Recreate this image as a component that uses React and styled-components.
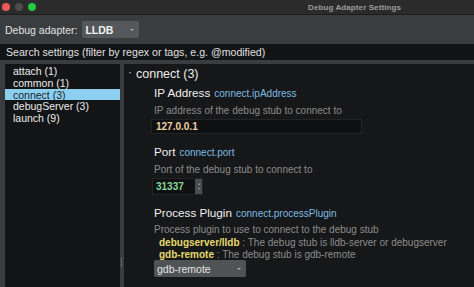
import styled, { createGlobalStyle } from "styled-components";

const GlobalStyle = createGlobalStyle`
  html, body {
    margin: 0;
    padding: 0;
    background: #3a3d3f;
    font-family: "Liberation Sans", Arial, sans-serif;
    overflow: hidden;
  }
`;

const categories = [
  { name: "attach (1)" },
  { name: "common (1)" },
  { name: "connect (3)", selected: true },
  { name: "debugServer (3)" },
  { name: "launch (9)" },
];

const App = () => {
  return (
    <Window>
      <GlobalStyle />
      <TitleBar>
        <Lights>
          <Light color="#ee5a55" />
          <Light color="#4b4b4b" />
          <Light color="#2ac840" />
        </Lights>
        <Title>Debug Adapter Settings</Title>
      </TitleBar>

      <Toolbar>
        <Label>Debug adapter:</Label>
        <Combo width={57}>
          <span>LLDB</span>
          <Arrow />
        </Combo>
      </Toolbar>

      <SearchBar>Search settings (filter by regex or tags, e.g. @modified)</SearchBar>

      <Body>
        <CategoryList>
          {categories.map((c) => (
            <CategoryItem key={c.name} selected={c.selected}>
              {c.name}
            </CategoryItem>
          ))}
        </CategoryList>
        <Splitter>
          <Grip />
        </Splitter>
        <SettingsPanel>
          <GroupHeader>
            <Caret />
            connect (3)
          </GroupHeader>
          <Settings>
            <Setting>
              <SettingTitle>
                IP Address <SettingKey>connect.ipAddress</SettingKey>
              </SettingTitle>
              <Description>IP address of the debug stub to connect to</Description>
              <TextInput>127.0.0.1</TextInput>
            </Setting>

            <Setting>
              <SettingTitle>
                Port <SettingKey>connect.port</SettingKey>
              </SettingTitle>
              <Description>Port of the debug stub to connect to</Description>
              <SpinBox>
                <span>31337</span>
                <Spinner>
                  <SpinArrow up />
                  <SpinArrow />
                </Spinner>
              </SpinBox>
            </Setting>

            <Setting>
              <SettingTitle>
                Process Plugin <SettingKey>connect.processPlugin</SettingKey>
              </SettingTitle>
              <Description tight>Process plugin to use to connect to the debug stub</Description>
              <Option>
                <OptionName>debugserver/lldb</OptionName> : The debug stub is lldb-server or debugserver
              </Option>
              <Option>
                <OptionName>gdb-remote</OptionName> : The debug stub is gdb-remote
              </Option>
              <Combo width={92} dim>
                <span>gdb-remote</span>
                <Arrow />
              </Combo>
            </Setting>
          </Settings>
        </SettingsPanel>
      </Body>
    </Window>
  );
};

export default App;

const Window = styled.div`
  width: 474px;
  height: 287px;
  display: flex;
  flex-direction: column;
  background: #3a3d3f;
  overflow: hidden;
`;

const TitleBar = styled.div`
  height: 14px;
  flex: none;
  display: flex;
  align-items: center;
  background: #2c2b2b;
  border-bottom: 1px solid #1c1c1c;
`;

const Lights = styled.div`
  display: flex;
  gap: 5px;
  padding-left: 2px;
`;

const Light = styled.span`
  width: 8px;
  height: 8px;
  border-radius: 50%;
  background: ${(p) => p.color};
`;

const Title = styled.div`
  margin-left: 272px;
  font-size: 8px;
  font-weight: bold;
  color: #9c9c9c;
  letter-spacing: 0.1px;
`;

const Toolbar = styled.div`
  height: 29px;
  flex: none;
  display: flex;
  align-items: center;
  gap: 5px;
  padding-left: 5px;
  background: #3a3d3f;
`;

const Label = styled.span`
  font-size: 10.5px;
  color: #e2e2e2;
`;

const Combo = styled.div`
  width: ${(p) => p.width}px;
  height: 17px;
  box-sizing: border-box;
  display: flex;
  align-items: center;
  justify-content: space-between;
  padding: 0 5px 0 3px;
  background: ${(p) => (p.dim ? "#505355" : "#55585a")};
  border-radius: 2px;
  font-size: 10.5px;
  font-weight: ${(p) => (p.dim ? "normal" : "bold")};
  color: ${(p) => (p.dim ? "#e4e4e4" : "#f2f2f2")};
`;

const Arrow = styled.span`
  width: 0;
  height: 0;
  border-left: 2px solid transparent;
  border-right: 2px solid transparent;
  border-top: 2px solid #aaa;
`;

const SearchBar = styled.div`
  height: 16px;
  flex: none;
  display: flex;
  align-items: center;
  padding-left: 6px;
  background: #111314;
  font-size: 10.6px;
  color: #e0e0e0;
  white-space: nowrap;
`;

const Body = styled.div`
  flex: 1;
  display: flex;
  padding-top: 4px;
  min-height: 0;
`;

const CategoryList = styled.ul`
  list-style: none;
  margin: 0 0 0 5px;
  padding: 1px 0 0;
  width: 115px;
  background: #121415;
`;

const CategoryItem = styled.li`
  height: 11.8px;
  display: flex;
  align-items: center;
  padding-left: 8px;
  font-size: 10.5px;
  color: ${(p) => (p.selected ? "#18242a" : "#ececec")};
  background: ${(p) => (p.selected ? "#8dcff0" : "transparent")};
`;

const Splitter = styled.div`
  width: 4px;
  flex: none;
  display: flex;
  align-items: flex-end;
  justify-content: center;
  padding-bottom: 20px;
  box-sizing: border-box;
  background: #3a3d3f;
`;

const Grip = styled.span`
  width: 1px;
  height: 9px;
  border-left: 1px dotted #8a8a8a;
`;

const SettingsPanel = styled.div`
  flex: 1;
  background: #161718;
  padding: 3px 0 0 5px;
  display: flex;
  flex-direction: column;
`;

const GroupHeader = styled.div`
  display: flex;
  align-items: center;
  gap: 5px;
  height: 14px;
  font-size: 12.5px;
  color: #ececec;
`;

const Caret = styled.span`
  width: 0;
  height: 0;
  margin-bottom: 3px;
  border-left: 1.5px solid transparent;
  border-right: 1.5px solid transparent;
  border-top: 2px solid #aaa;
`;

const Settings = styled.div`
  display: flex;
  flex-direction: column;
  gap: 11px;
  padding: 5px 0 0 25px;
`;

const Setting = styled.div`
  display: flex;
  flex-direction: column;
`;

const SettingTitle = styled.div`
  display: flex;
  align-items: baseline;
  gap: 4px;
  height: 16px;
  font-size: 11.7px;
  color: #f0f0f0;
`;

const SettingKey = styled.span`
  font-size: 10px;
  color: #7dbbe0;
`;

const Description = styled.div`
  height: ${(p) => (p.tight ? "14px" : "16px")};
  display: flex;
  align-items: center;
  font-size: 10px;
  color: #8c8c8c;
  white-space: nowrap;
`;

const TextInput = styled.div`
  width: 211px;
  height: 15px;
  margin: 1px 0 0 -3px;
  box-sizing: border-box;
  display: flex;
  align-items: center;
  padding-left: 4px;
  background: #0f1011;
  border: 1px solid #232425;
  font-size: 10px;
  font-weight: bold;
  color: #efd1a8;
`;

const SpinBox = styled.div`
  width: 51px;
  height: 17px;
  margin: 1px 0 0 -2px;
  box-sizing: border-box;
  display: flex;
  align-items: center;
  justify-content: space-between;
  padding-left: 3px;
  background: #0f1011;
  border: 1px solid #232425;
  font-size: 10px;
  font-weight: bold;
  color: #86d69a;
`;

const Spinner = styled.div`
  width: 7px;
  height: 100%;
  display: flex;
  flex-direction: column;
  align-items: center;
  justify-content: space-evenly;
  background: #4a4d4f;
`;

const SpinArrow = styled.span`
  width: 0;
  height: 0;
  border-left: 1.5px solid transparent;
  border-right: 1.5px solid transparent;
  ${(p) => (p.up ? "border-bottom: 2px solid #999;" : "border-top: 2px solid #999;")}
`;

const Option = styled.div`
  height: 12px;
  display: flex;
  align-items: center;
  padding-left: 5px;
  font-size: 10px;
  color: #8c8c8c;
  white-space: pre;
`;

const OptionName = styled.span`
  font-weight: bold;
  color: #e6da6e;
`;
